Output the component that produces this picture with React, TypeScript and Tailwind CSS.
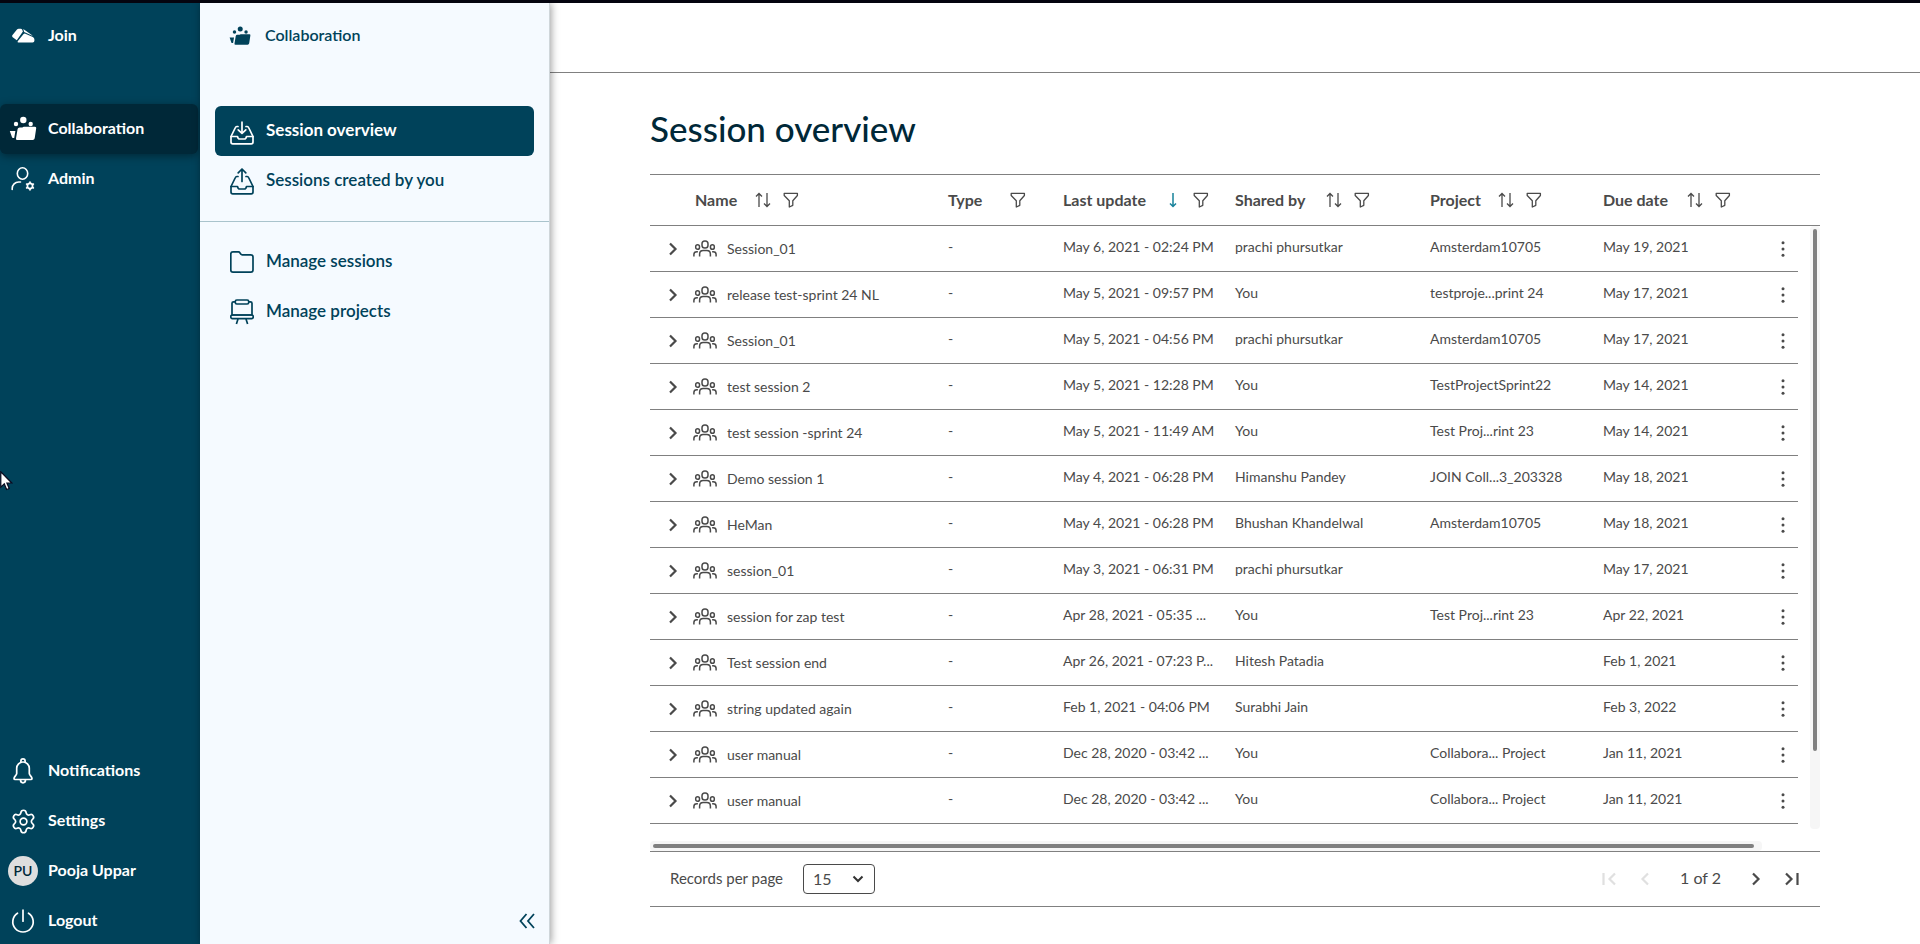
import React from 'react';
import { Settings } from 'lucide-react';

type IconProps = { className?: string };

const JoinIcon = () => (
  <svg width="24" height="16" viewBox="0 0 24 16" fill="currentColor" aria-hidden="true">
    <path d="M1.300 7.200 6 1.500Q6.700.7 7.700.7h2.100q.9 0 1.300.8l.8 1.900L5.800 12.200 1.700 9.300q-1-1-.4-2.100z" />
    <path d="m12.300.9 9.500 6.900-1-.3L13.200 4z" />
    <path d="m6.700 13.200 5.900-7.100 1.200-.5 8 3.500q1.600.8 1.600 2.500v1.200q0 1.800-1.800 1.800H7.400q-1.200-.3-.7-1.400z" />
  </svg>
);

const CollaborationIcon: React.FC<{ size: number }> = ({ size }) => (
  <svg width={size} height={size} viewBox="0 0 28 28" fill="currentColor" aria-hidden="true">
    <circle cx="14.3" cy="5" r="3.2" />
    <circle cx="7" cy="9" r="2.2" />
    <circle cx="21.7" cy="9" r="2.2" />
    <path d="M10.6 12.5h2.8q.7-.8 1.500-.8H26q1.500 0 1.200 1.600l-1.500 10q-.3 1.700-2 1.700H8.300q-1.600 0-1.300-1.600l1.600-9.400q.4-1.500 2-1.500z" />
    <path d="M.8 16h5.600l-1.200 7H4q-.8 0-1-.8z" />
  </svg>
);

const AdminIcon = () => (
  <svg width="24" height="24" viewBox="0 0 24 24" fill="none" stroke="currentColor" strokeWidth="1.6" strokeLinecap="round" aria-hidden="true">
    <ellipse cx="11.5" cy="6.5" rx="5.2" ry="5.7" />
    <path d="M1.2 22.5v-1a6.500 6.500 0 0 1 6.500-6.500h1.800" />
    <circle cx="19" cy="19" r="2.6" strokeWidth="1.7" />
    <path strokeWidth="1.8" d="M19 15.700v-.5M19 22.800v-.5M21.900 17.400l.4-.3M15.700 20.900l.4-.3M21.900 20.600l.4.3M15.700 17.100l.4.3" />
  </svg>
);

const BellIcon = () => (
  <svg width="24" height="26" viewBox="0 0 24 26" fill="none" stroke="currentColor" strokeWidth="1.7" strokeLinejoin="round" aria-hidden="true">
    <path d="M9.900 4.300V3a2.100 2.100 0 0 1 4.200 0v1.300" />
    <path d="M12 4a6.300 6.300 0 0 0-6.300 6.300v5.200c0 1.800-2.700 3-2.700 5q0 1 1.200 1h15.600q1.200 0 1.200-1c0-2-2.700-3.200-2.700-5v-5.200A6.300 6.300 0 0 0 12 4z" />
    <path d="M9.500 21.800a2.500 3 0 0 0 5 0" />
  </svg>
);

const PowerIcon = () => (
  <svg width="24" height="24" viewBox="0 0 24 24" fill="none" stroke="currentColor" strokeWidth="1.7" strokeLinecap="round" aria-hidden="true">
    <path d="M6.500 4.200a10.200 10.200 0 1 0 11 0M12 1.200v11" />
  </svg>
);

const Tray = () => (
  <>
    <path d="M8 8.500H6.800q-1 0-1.400 1L1 18.500M16 8.500h1.200q1 0 1.400 1L23 18.500" />
    <path d="M1 18.500h6.500q.6 2.500 2 2.500h5q1.400 0 2-2.500H23V24q0 1.800-1.800 1.800H2.800Q1 25.800 1 24z" />
  </>
);

const InboxDownIcon = () => (
  <svg width="24" height="27" viewBox="0 0 24 27" fill="none" stroke="currentColor" strokeWidth="1.7" strokeLinecap="round" strokeLinejoin="round" aria-hidden="true">
    <Tray />
    <path d="M12 4.200v11M8.200 11.800l3.800 3.600 3.800-3.600" />
  </svg>
);

const InboxUpIcon = () => (
  <svg width="24" height="27" viewBox="0 0 24 27" fill="none" stroke="currentColor" strokeWidth="1.7" strokeLinecap="round" strokeLinejoin="round" aria-hidden="true">
    <Tray />
    <path d="M12 13.500V1M8.200 4.800 12 1l3.800 3.800" />
  </svg>
);

const FolderIcon = () => (
  <svg width="24" height="22" viewBox="0 0 24 22" fill="none" stroke="currentColor" strokeWidth="1.7" strokeLinejoin="round" aria-hidden="true">
    <path d="M3 .9h5.500q.9 0 1.400.8l1 1.500q.4.7 1.300.7h8.600q2.200 0 2.200 2.200v12.800q0 2.200-2.200 2.200H3q-2.200 0-2.200-2.200V3.100Q.8.9 3 .9z" />
  </svg>
);

const BoardIcon = () => (
  <svg width="24" height="26" viewBox="0 0 24 26" fill="none" stroke="currentColor" strokeWidth="1.7" strokeLinejoin="round" aria-hidden="true">
    <path d="M5 2.800H3.500q-1.500 0-1.500 1.500V16h20V4.300q0-1.500-1.500-1.500H19" />
    <rect x="5.3" y="1" width="13.4" height="4" rx="1.5" />
    <rect x=".8" y="16" width="22.4" height="3.6" rx="1.5" />
    <path d="m8 20-1.600 5M16 20l1.600 5" />
  </svg>
);

const SortIcon = () => (
  <svg width="16" height="16" viewBox="0 0 16 16" fill="none" stroke="currentColor" strokeWidth="1.3" aria-hidden="true">
    <path d="M4 15V1.500M1 4.500l3-3 3 3M12 1v13.500M9 11.500l3 3 3-3" />
  </svg>
);

const ArrowDownIcon = () => (
  <svg width="16" height="16" viewBox="0 0 16 16" fill="none" stroke="#17829b" strokeWidth="1.5" aria-hidden="true">
    <path d="M8 1v13.500M5 11.500l3 3 3-3" />
  </svg>
);

const FilterIcon = () => (
  <svg width="16" height="16" viewBox="0 0 16 16" fill="none" stroke="currentColor" strokeWidth="1.3" strokeLinejoin="round" aria-hidden="true">
    <path d="M1.200 1.300h13.200v2.200L9.800 8.700v4.600L6.300 15V8.700L1.200 3.500z" />
  </svg>
);

const GroupIcon = () => (
  <svg width="24" height="17" viewBox="0 0 24 17" fill="none" stroke="currentColor" strokeWidth="1.5" aria-hidden="true">
    <rect x="9" y="1" width="6" height="7" rx="2.8" />
    <rect x="2.7" y="4.7" width="3.8" height="4.6" rx="1.9" />
    <rect x="17.5" y="4.7" width="3.8" height="4.6" rx="1.9" />
    <path d="M6.600 16.500v-2.300q0-3.600 3.600-3.600h3.600q3.600 0 3.600 3.600v2.300M.9 16.500v-2q0-2.700 3-2.700h1M23.100 16.500v-2q0-2.700-3-2.700h-1" />
  </svg>
);

const ChevronIcon: React.FC<IconProps> = ({ className }) => (
  <svg width="16" height="16" viewBox="0 0 16 16" fill="none" stroke="currentColor" strokeWidth="2.2" className={className} aria-hidden="true">
    <path d="m5 2.500 5.500 5.500L5 13.500" />
  </svg>
);

const ChevronEndIcon: React.FC<IconProps> = ({ className }) => (
  <svg width="16" height="16" viewBox="0 0 16 16" fill="none" stroke="currentColor" strokeWidth="2.2" className={className} aria-hidden="true">
    <path d="m2 2.500 5.500 5.500L2 13.500M13.500 2v12" />
  </svg>
);

const DotsIcon = () => (
  <svg width="16" height="16" viewBox="0 0 16 16" fill="currentColor" aria-hidden="true">
    <circle cx="8" cy="1.8" r="1.5" />
    <circle cx="8" cy="8" r="1.5" />
    <circle cx="8" cy="14.2" r="1.5" />
  </svg>
);

const Avatar = () => (
  <span className="flex h-[30px] w-[30px] shrink-0 items-center justify-center rounded-full bg-[#dedede] text-sm font-semibold text-[#002838]">
    PU
  </span>
);

const columns = [
  { label: 'Name', width: 'w-[60px]', sort: 'both' },
  { label: 'Type', width: 'w-[62px]', sort: 'none' },
  { label: 'Last update', width: 'w-[102px]', sort: 'down' },
  { label: 'Shared by', width: 'w-[91px]', sort: 'both' },
  { label: 'Project', width: 'w-[68px]', sort: 'both' },
  { label: 'Due date', width: 'w-[84px]', sort: 'both' },
];

const sessions = [
  ['Session_01', 'May 6, 2021 - 02:24 PM', 'prachi phursutkar', 'Amsterdam10705', 'May 19, 2021'],
  ['release test-sprint 24 NL', 'May 5, 2021 - 09:57 PM', 'You', 'testproje...print 24', 'May 17, 2021'],
  ['Session_01', 'May 5, 2021 - 04:56 PM', 'prachi phursutkar', 'Amsterdam10705', 'May 17, 2021'],
  ['test session 2', 'May 5, 2021 - 12:28 PM', 'You', 'TestProjectSprint22', 'May 14, 2021'],
  ['test session -sprint 24', 'May 5, 2021 - 11:49 AM', 'You', 'Test Proj...rint 23', 'May 14, 2021'],
  ['Demo session 1', 'May 4, 2021 - 06:28 PM', 'Himanshu Pandey', 'JOIN Coll...3_203328', 'May 18, 2021'],
  ['HeMan', 'May 4, 2021 - 06:28 PM', 'Bhushan Khandelwal', 'Amsterdam10705', 'May 18, 2021'],
  ['session_01', 'May 3, 2021 - 06:31 PM', 'prachi phursutkar', '', 'May 17, 2021'],
  ['session for zap test', 'Apr 28, 2021 - 05:35 ...', 'You', 'Test Proj...rint 23', 'Apr 22, 2021'],
  ['Test session end', 'Apr 26, 2021 - 07:23 P...', 'Hitesh Patadia', '', 'Feb 1, 2021'],
  ['string updated again', 'Feb 1, 2021 - 04:06 PM', 'Surabhi Jain', '', 'Feb 3, 2022'],
  ['user manual', 'Dec 28, 2020 - 03:42 ...', 'You', 'Collabora... Project', 'Jan 11, 2021'],
  ['user manual', 'Dec 28, 2020 - 03:42 ...', 'You', 'Collabora... Project', 'Jan 11, 2021'],
];

const RailItem: React.FC<{ icon: React.ReactNode; label: string; active?: boolean }> = ({ icon, label, active }) => (
  <a
    href="#"
    className={`flex h-[50px] items-center gap-2.5 pl-2 font-bold text-white ${
      active ? 'mr-0.5 rounded-md bg-[#002838] shadow-[0_2px_8px_rgba(0,0,0,0.4)]' : ''
    }`}
  >
    <span className="flex w-[30px] justify-center">{icon}</span>
    <span className="pb-0.5">{label}</span>
  </a>
);

const PanelItem: React.FC<{ icon: React.ReactNode; label: string; active?: boolean }> = ({ icon, label, active }) => (
  <a
    href="#"
    className={`mx-[15px] flex h-[50px] items-center gap-3 rounded-md pl-[15px] text-[17px] ${
      active ? 'bg-[#00425a] font-bold text-white' : 'font-semibold text-[#00425a]'
    }`}
  >
    {icon}
    <span className="pb-0.5">{label}</span>
  </a>
);

const Rail = () => (
  <nav className="flex w-[200px] shrink-0 flex-col bg-[#00425a]" aria-label="Main">
    <a href="#" className="mb-[35px] flex h-[66px] items-center gap-2.5 pl-2 font-bold text-white">
      <span className="flex w-[30px] justify-center">
        <JoinIcon />
      </span>
      <span className="pb-0.5">Join</span>
    </a>
    <RailItem icon={<CollaborationIcon size={28} />} label="Collaboration" active />
    <RailItem icon={<AdminIcon />} label="Admin" />
    <div className="mt-auto -mb-0.5">
      <RailItem icon={<BellIcon />} label="Notifications" />
      <RailItem icon={<Settings size={27} strokeWidth={1.5} />} label="Settings" />
      <RailItem icon={<Avatar />} label="Pooja Uppar" />
      <RailItem icon={<PowerIcon />} label="Logout" />
    </div>
  </nav>
);

const Panel = () => (
  <aside className="z-10 flex w-[350px] shrink-0 flex-col border-r border-[#cfd6da] bg-[#f5faff] shadow-[1px_0_8px_rgba(0,0,0,0.4)]">
    <div className="mb-[37px] flex h-[66px] items-center gap-3.5 pl-[29px] font-semibold text-[#00425a]">
      <CollaborationIcon size={22} />
      <span className="pb-0.5">Collaboration</span>
    </div>
    <PanelItem icon={<InboxDownIcon />} label="Session overview" active />
    <PanelItem icon={<InboxUpIcon />} label="Sessions created by you" />
    <hr className="my-[15px] border-[#a9c3cc]" />
    <PanelItem icon={<FolderIcon />} label="Manage sessions" />
    <PanelItem icon={<BoardIcon />} label="Manage projects" />
    <button type="button" aria-label="Collapse menu" className="mt-auto mb-3.5 mr-3.5 self-end text-[#00425a]">
      <svg width="16" height="18" viewBox="0 0 16 18" fill="none" stroke="currentColor" strokeWidth="1.8">
        <path d="M7.500 2 1.500 9l6 7M15 2 9 9l6 7" />
      </svg>
    </button>
  </aside>
);

const SessionTable = () => (
  <table className="w-full table-fixed border-separate border-spacing-0 text-left text-[#4a4a4a]">
    <colgroup>
      <col />
      <col className="w-[115px]" />
      <col className="w-[172px]" />
      <col className="w-[195px]" />
      <col className="w-[173px]" />
      <col className="w-[160px]" />
      <col className="w-[35px]" />
      <col className="w-[22px]" />
    </colgroup>
    <thead>
      <tr>
        {columns.map((col, i) => (
          <th key={col.label} scope="col" className={`h-[52px] border-y border-[#808080] p-0 font-bold ${i === 0 ? 'pl-[45px]' : ''}`}>
            <div className="flex items-center">
              <span className={`shrink-0 pb-px whitespace-nowrap ${col.width}`}>{col.label}</span>
              {col.sort !== 'none' && (
                <button type="button" aria-label={`Sort by ${col.label}`} className="mr-3 shrink-0">
                  {col.sort === 'down' ? <ArrowDownIcon /> : <SortIcon />}
                </button>
              )}
              <button type="button" aria-label={`Filter by ${col.label}`} className="shrink-0">
                <FilterIcon />
              </button>
            </div>
          </th>
        ))}
        <td className="border-y border-[#808080]" colSpan={2}></td>
      </tr>
    </thead>
    <tbody className="text-sm">
      {sessions.map(([name, updated, sharedBy, project, due], i) => (
        <tr key={i} className="*:h-[46px] *:border-b *:border-[#808080] *:whitespace-nowrap">
          <td className="p-0">
            <div className="flex items-center">
              <button type="button" aria-label={`Expand ${name}`} className="ml-[15px] mr-3">
                <ChevronIcon />
              </button>
              <GroupIcon />
              <span className="ml-2.5">{name}</span>
            </div>
          </td>
          <td className="p-0 pb-[3px]">-</td>
          <td className="p-0 pb-[3px]">{updated}</td>
          <td className="p-0 pb-[3px]">{sharedBy}</td>
          <td className="p-0 pb-[3px]">{project}</td>
          <td className="p-0 pb-[3px]">{due}</td>
          <td className="p-0">
            <button type="button" aria-label={`Actions for ${name}`} className="ml-3 block">
              <DotsIcon />
            </button>
          </td>
        </tr>
      ))}
    </tbody>
  </table>
);

const TableFooter = () => (
  <div className="flex h-14 items-center border-y border-[#808080] px-5 text-[#4a4a4a]">
    <label htmlFor="page-size" className="mr-5 pb-0.5 text-[15px]">
      Records per page
    </label>
    <div className="relative">
      <select id="page-size" className="h-[30px] w-[72px] appearance-none rounded border border-[#4a4a4a] bg-white pl-[9px]">
        <option>15</option>
        <option>30</option>
        <option>50</option>
      </select>
      <svg width="12" height="12" viewBox="0 0 12 12" fill="none" stroke="#333" strokeWidth="2" className="pointer-events-none absolute top-[9px] right-[11px]">
        <path d="m1.500 3.500 4.500 4.500 4.500-4.500" />
      </svg>
    </div>
    <div className="ml-auto flex items-center gap-5">
      <button type="button" aria-label="First page" disabled className="text-[#e0e0e0]">
        <ChevronEndIcon className="rotate-180" />
      </button>
      <button type="button" aria-label="Previous page" disabled className="text-[#e0e0e0]">
        <ChevronIcon className="rotate-180" />
      </button>
      <span className="px-[7px] pb-0.5">1 of 2</span>
      <button type="button" aria-label="Next page">
        <ChevronIcon />
      </button>
      <button type="button" aria-label="Last page">
        <ChevronEndIcon />
      </button>
    </div>
  </div>
);

function App() {
  return (
    <div className="relative flex min-h-screen overflow-hidden border-t-[3px] border-[#04040f] bg-white font-['Lato','Liberation_Sans',sans-serif] text-base">
      <Rail />
      <Panel />
      <div className="min-w-0 flex-1">
        <header className="h-[70px] border-b border-[#808080]"></header>
        <main className="px-[100px] pt-[35px] pb-8">
          <h1 className="mb-[26px] text-[35px] leading-10 font-medium text-[#002838]">Session overview</h1>
          <div className="relative mb-[17px]">
            <SessionTable />
            {/* vertical scrollbar */}
            <div className="absolute top-[52px] right-0 -bottom-[5px] w-2.5 rounded bg-[#f6f6f6] px-[3px] pt-[3px]">
              <div className="h-[87%] rounded-full bg-[#808080]"></div>
            </div>
          </div>
          {/* horizontal scrollbar */}
          <div className="h-2.5 w-[95%] rounded bg-[#f6f6f6] pt-[3px] pr-2 pl-[3px]">
            <div className="h-1 rounded-full bg-[#808080]"></div>
          </div>
          <TableFooter />
        </main>
      </div>
      {/* mouse pointer */}
      <svg width="13" height="20" viewBox="0 0 13 20" className="absolute top-[468px] left-0 z-20" aria-hidden="true">
        <path d="M.8.8v15.400l3.500-3.300 2.300 5.600 2.600-1-2.300-5.500h4.900z" fill="#fff" stroke="#0a0a20" strokeWidth="1.2" />
      </svg>
    </div>
  );
}

export default App;
